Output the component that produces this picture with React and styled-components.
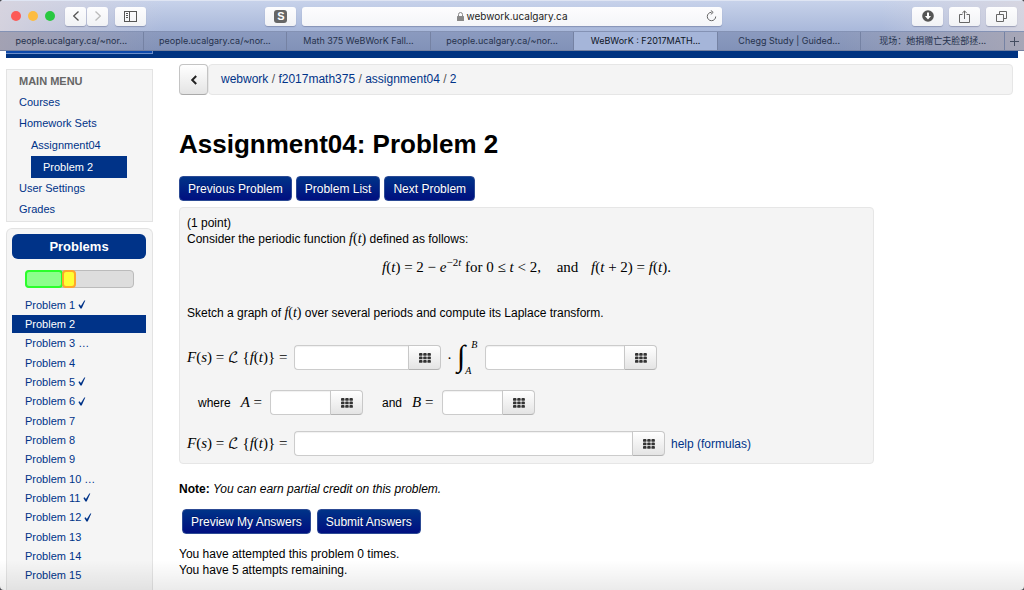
import React, { useState } from 'react';
import styled, { createGlobalStyle, css } from 'styled-components';

const GlobalStyle = createGlobalStyle`
  * {
    box-sizing: border-box;
  }

  body {
    margin: 0;
    background: #4a4a50;
    color: #000;
    font-family: "Liberation Sans", Arial, sans-serif;
    font-size: 12px;
    line-height: 16px;
  }

  button, input {
    font-family: inherit;
    font-size: inherit;
  }

  a {
    color: #003388;
    text-decoration: none;
  }
`;

const Window = styled.div`
  position: relative;
  display: flex;
  flex-direction: column;
  min-height: 100vh;
  overflow: hidden;
  background: #fff;
  border-radius: 4px;

  &::after {
    content: '';
    position: absolute;
    left: 0;
    right: 0;
    bottom: 0;
    height: 30px;
    background: linear-gradient(rgba(0, 0, 0, 0), rgba(0, 0, 0, 0.08));
    pointer-events: none;
  }
`;

/* ---------- browser ---------- */

const Toolbar = styled.header`
  display: flex;
  align-items: center;
  height: 31px;
  padding: 0 7px;
  border-top: 1px solid #dfe5f3;
  background:
    linear-gradient(90deg, rgba(216, 212, 222, 0.9), rgba(216, 212, 222, 0) 16%, rgba(216, 212, 222, 0) 86%, rgba(216, 214, 224, 0.9)),
    linear-gradient(#c7d2ea, #a9b8da);
`;

const ToolbarSide = styled.div`
  display: flex;
  flex: 1;
  align-items: center;
  gap: ${({ gap }) => gap || 0}px;
  justify-content: ${({ end }) => (end ? 'flex-end' : 'flex-start')};
`;

const Lights = styled.div`
  display: flex;
  gap: 7px;
  margin: 0 10px 0 4px;
`;

const Light = styled.span`
  width: 10px;
  height: 10px;
  border-radius: 50%;
  background: ${({ color }) => color};
`;

const ToolButton = styled.button`
  display: flex;
  align-items: center;
  justify-content: center;
  width: ${({ narrow }) => (narrow ? 21 : 31)}px;
  height: 19px;
  margin-right: ${({ after }) => after || 0}px;
  margin-left: ${({ push }) => (push ? 'auto' : 0)};
  padding: 0;
  border: 0;
  border-radius: 3px;
  background: linear-gradient(#fdfdfe, #f1f2f5);
  box-shadow: 0 1px 1px rgba(60, 70, 110, 0.35);
  color: #555;
`;

const AddressBar = styled.div`
  display: flex;
  align-items: center;
  justify-content: center;
  width: 41.5%;
  height: 19px;
  padding: 0 5px 0 16px;
  border-radius: 3px;
  background: linear-gradient(#fdfdfe, #f4f5f8);
  box-shadow: 0 1px 1px rgba(60, 70, 110, 0.35);
  color: #222;
  font-family: Inter, sans-serif;
  font-size: 10px;
`;

const Address = styled.div`
  display: flex;
  flex: 1;
  align-items: center;
  justify-content: center;
  gap: 3px;
`;

const Reload = styled.button`
  display: flex;
  padding: 0;
  border: 0;
  background: none;
`;

const Badge = styled.span`
  width: 13px;
  height: 13px;
  border-radius: 3px;
  background: #666;
  color: #fff;
  font-size: 11px;
  font-weight: bold;
  line-height: 13px;
`;

const TabStrip = styled.nav`
  display: flex;
  height: 20px;
  border-top: 1px solid #8492b4;
  border-bottom: 1px solid #74809f;
  background:
    linear-gradient(90deg, rgba(166, 163, 178, 0.9), rgba(166, 163, 178, 0) 16%, rgba(166, 163, 178, 0) 80%, rgba(170, 168, 182, 0.9)),
    linear-gradient(#8b9abf, #8292b8);
`;

const Tab = styled.a`
  flex: 1;
  min-width: 0;
  border-right: 1px solid #7582a3;
  color: #26324c;
  font-family: Inter, "Noto Sans CJK SC", sans-serif;
  font-size: 9px;
  line-height: 18px;
  text-align: center;
  white-space: nowrap;

  ${({ active }) => active && css`
    background: #a5b5d9;
    color: #0d1424;
  `}
`;

const NewTab = styled.button`
  display: flex;
  align-items: center;
  justify-content: center;
  width: 19px;
  padding: 0;
  border: 0;
  background: none;
`;

/* ---------- page ---------- */

const Masthead = styled.div`
  height: 7px;
  margin: 0 6px;
  background: #003380;
`;

const Logo = styled.div`
  width: 147px;
  height: 3px;
  border: solid #6c8fca;
  border-width: 0 1px 1px 0;
  background: #0d49ab;
`;

const Body = styled.div`
  display: flex;
  flex: 1;
  gap: 26px;
  padding: 6px 11px 0 6px;
`;

const Sidebar = styled.aside`
  display: flex;
  flex: 0 0 147px;
  flex-direction: column;
  gap: 6px;
  padding-top: 5px;
  font-size: 11px;
`;

const Menu = styled.nav`
  padding: 0 12px 1px;
  border: 1px solid #e3e3e3;
  background: #f5f5f5;
`;

const MenuTitle = styled.h2`
  margin: 0;
  color: #666;
  font-size: 11px;
  line-height: 22px;
`;

const MenuList = styled.ul`
  margin: 0;
  padding: 0 0 0 ${({ nested }) => (nested ? 12 : 0)}px;
  line-height: ${({ nested }) => (nested ? 22 : 21)}px;
  list-style: none;
`;

const MenuLink = styled.a`
  display: block;

  ${({ active }) => active && css`
    margin-right: 13px;
    padding-left: 12px;
    background: #003388;
    color: #fff;
  `}
`;

const ProblemsBox = styled.nav`
  display: flex;
  flex: 1;
  flex-direction: column;
  padding: 5px 6px 5px 5px;
  border: 1px solid #e3e3e3;
  border-bottom: 0;
  border-radius: 6px 6px 0 0;
  background: #f5f5f5;
`;

const ProblemsTitle = styled.h2`
  margin: 0;
  border-radius: 6px;
  background: #003388;
  color: #fff;
  font-size: 13px;
  line-height: 25px;
  text-align: center;
`;

const Progress = styled.div`
  display: flex;
  height: 18px;
  margin: 11px 12px 7px 13px;
  border: 1px solid #bbb;
  border-radius: 4px;
  background: #ddd;
`;

const Bar = styled.div`
  margin: -1px 0 -1px -1px;
  border: 2px solid ${({ edge }) => edge};
  border-radius: 4px;
  background: ${({ fill }) => fill};
`;

const ProblemList = styled.ul`
  display: flex;
  flex: 1;
  flex-direction: column;
  margin: 0;
  padding: 0;
  list-style: none;
`;

const ProblemItem = styled.li`
  display: flex;
  flex: 1;
  min-height: 17px;
`;

const ProblemLink = styled.a`
  display: flex;
  flex: 1;
  align-items: center;
  gap: 3px;
  margin: 1px 0;
  padding-left: 13px;

  ${({ active }) => active && css`
    background: #003388;
    color: #fff;
  `}
`;

const Main = styled.main`
  flex: 1;
  min-width: 0;
`;

const CrumbRow = styled.div`
  display: flex;
`;

const UpButton = styled.button`
  display: flex;
  align-items: center;
  justify-content: center;
  width: 29px;
  height: 31px;
  padding: 0;
  border: 1px solid #c4c4c4;
  border-bottom-color: #aaa;
  border-radius: 4px;
  background: linear-gradient(#fff, #e4e4e4);
`;

const Crumbs = styled.nav`
  flex: 1;
  padding: 0 12px;
  border: 1px solid #e6e6e6;
  border-radius: 4px;
  background: #f4f4f4;
  color: #555;
  line-height: 29px;
`;

const Title = styled.h1`
  margin: 32px 0 15px;
  font-size: 26px;
  line-height: 34px;
`;

const Actions = styled.div`
  display: flex;
  gap: ${({ wide }) => (wide ? 6 : 4)}px;
  padding-left: ${({ wide }) => (wide ? 3 : 0)}px;
`;

const PrimaryButton = styled.button`
  height: 25px;
  padding: 0 8px;
  border: 1px solid #2c4a94;
  border-radius: 4px;
  background: linear-gradient(#003388, #000f80);
  color: #fff;
  text-shadow: 0 -1px 0 rgba(0, 0, 0, 0.25);
  white-space: nowrap;
`;

const Panel = styled.section`
  width: 83.333%;
  margin-top: 6px;
  padding: 7px;
  border: 1px solid #e6e6e6;
  border-radius: 4px;
  background: #f4f4f4;
`;

const Text = styled.p`
  margin: 0;
`;

const Sketch = styled.p`
  margin: 28px 0 24px;
`;

const MathText = styled.span`
  font-family: "Liberation Serif", "Times New Roman", serif;
  font-size: ${({ small }) => (small ? 14 : 15)}px;
  line-height: 16px;
  white-space: nowrap;

  sup {
    font-size: 11px;
    line-height: 0;
  }
`;

const Formula = styled.div`
  margin-top: 12px;
  text-align: center;
  line-height: 18px;
`;

const FormulaWord = styled.span`
  padding: 0 9px 0 12px;
`;

const Script = styled.span`
  font-family: "DejaVu Math TeX Gyre", "DejaVu Serif", "DejaVu Sans", serif;
  font-size: 14px;
  line-height: 0;
`;

const Row = styled.div`
  display: flex;
  align-items: center;
  margin-top: ${({ space }) => space || 0}px;
  padding-left: ${({ indent }) => indent || 0}px;
`;

const Label = styled.label`
  flex: none;
  width: ${({ width }) => (width ? `${width}px` : 'auto')};
  white-space: nowrap;
`;

const Word = styled.span`
  margin-right: 10px;
`;

const AnswerBox = styled.span`
  display: flex;
  margin-right: ${({ after }) => after || 0}px;
`;

const AnswerInput = styled.input`
  width: ${({ size }) => size}px;
  height: 25px;
  padding: 0 5px;
  border: 1px solid #ccc;
  border-right: 0;
  border-radius: 4px 0 0 4px;
  background: #fff;
  box-shadow: inset 0 1px 1px rgba(0, 0, 0, 0.06);
`;

const KeypadButton = styled.button`
  display: flex;
  align-items: center;
  justify-content: center;
  width: 33px;
  height: 25px;
  padding: 0;
  border: 1px solid #c8c8c8;
  border-bottom-color: #b3b3b3;
  border-radius: 0 4px 4px 0;
  background: linear-gradient(#fff, #e4e4e4);
`;

const Integral = styled.span`
  display: flex;
  flex: none;
  align-items: flex-start;
  width: 28px;
  height: 36px;
  margin: -6px 0 -6px 5px;
  font-family: "Liberation Serif", serif;
`;

const IntegralSign = styled.span`
  font-size: 30px;
  font-style: italic;
  line-height: 32px;
`;

const Limits = styled.span`
  display: flex;
  flex-direction: column;
  justify-content: space-between;
  height: 36px;
  font-size: 10px;
  font-style: italic;
  line-height: 10px;
`;

const Upper = styled.span`
  padding-left: 6px;
`;

const Note = styled.p`
  margin: 17px 0 12px;
`;

const Attempts = styled.p`
  margin: 12px 0 0;
`;

const Chevron = ({ flip, color = '#555' }) => (
  <svg width="8" height="12" viewBox="0 0 8 12" fill="none" stroke={color} strokeWidth="1.3">
    <path d={flip ? 'M1.5 1.5 6.3 6l-4.8 4.5' : 'M6.5 1.5 1.7 6l4.8 4.5'} />
  </svg>
);

const Check = () => (
  <svg width="8" height="9" viewBox="0 0 8 9" fill="#003388">
    <path d="M.4 5.1 1.6 4.3 2.9 6 6.3.4 7.3.4 3.7 8.4 2.4 8.4z" />
  </svg>
);

const Keypad = () => (
  <svg width="12" height="10" viewBox="0 0 12 10" fill="#333">
    {[0, 1, 2].map((r) => [0, 1, 2].map((c) => (
      <rect key={`${r}${c}`} x={c * 4.2} y={r * 3.5} width="3.5" height="2.8" rx="0.9" />
    )))}
  </svg>
);

const Answer = ({ id, size, after }) => {
  const [value, setValue] = useState('');

  return (
    <AnswerBox after={after}>
      <AnswerInput id={id} aria-label={id} size={size} value={value} onChange={(event) => setValue(event.target.value)} />
      <KeypadButton type="button" aria-label="Equation editor"><Keypad /></KeypadButton>
    </AnswerBox>
  );
};

const Laplace = () => (
  <MathText><i>F</i>(<i>s</i>) = <Script>ℒ</Script> {'{'}<i>f</i>(<i>t</i>){'}'} =</MathText>
);

const tabs = [
  'people.ucalgary.ca/~nor...',
  'people.ucalgary.ca/~nor...',
  'Math 375 WeBWorK Fall...',
  'people.ucalgary.ca/~nor...',
  'WeBWorK : F2017MATH...',
  'Chegg Study | Guided...',
  '现场：她捐赠亡夫脸部拯...',
];

const solved = [1, 5, 6, 11, 12];
const started = [3, 10];
const problems = Array.from({ length: 15 }, (_, i) => i + 1);

const Browser = () => (
  <>
    <Toolbar>
      <ToolbarSide>
        <Lights>
          <Light color="#fc5b57" />
          <Light color="#fdbc40" />
          <Light color="#28c840" />
        </Lights>
        <ToolButton narrow after={1} aria-label="Back"><Chevron /></ToolButton>
        <ToolButton narrow after={7} aria-label="Forward"><Chevron flip color="#bbb" /></ToolButton>
        <ToolButton aria-label="Show sidebar">
          <svg width="13" height="11" viewBox="0 0 13 11" fill="none" stroke="#555">
            <rect x="0.5" y="0.5" width="12" height="10" />
            <path d="M5.5 1v9M2 2.5h2M2 4.5h2M2 6.5h2" />
          </svg>
        </ToolButton>
        <ToolButton push after={6} aria-label="Extension"><Badge>S</Badge></ToolButton>
      </ToolbarSide>
      <AddressBar>
        <Address>
          <svg width="7" height="9" viewBox="0 0 7 9" fill="#888">
            <rect y="4" width="7" height="5" rx="0.6" />
            <path d="M1.5 4V2.5a2 2 0 0 1 4 0V4" fill="none" stroke="#888" />
          </svg>
          webwork.ucalgary.ca
        </Address>
        <Reload aria-label="Reload">
          <svg width="11" height="12" viewBox="0 0 11 12" fill="none" stroke="#666">
            <path d="M5.5 2.3A4.2 4.2 0 1 0 9.7 6.5" />
            <path d="M4.8.4 7.2 2.4 4.8 4.4" />
          </svg>
        </Reload>
      </AddressBar>
      <ToolbarSide end gap={6}>
        <ToolButton aria-label="Downloads">
          <svg width="12" height="12" viewBox="0 0 12 12">
            <circle cx="6" cy="6" r="5.8" fill="#555" />
            <path d="M6 2.5v5" stroke="#fff" strokeWidth="2" />
            <path d="M2.9 5.9h6.2L6 9.4z" fill="#fff" />
          </svg>
        </ToolButton>
        <ToolButton aria-label="Share">
          <svg width="11" height="13" viewBox="0 0 11 13" fill="none" stroke="#666">
            <path d="M3.5 4.5h-3v8h10v-8h-3M5.5 9V1M3.2 3.2 5.5.9l2.3 2.3" />
          </svg>
        </ToolButton>
        <ToolButton aria-label="Show all tabs">
          <svg width="11" height="11" viewBox="0 0 11 11" fill="none" stroke="#666">
            <path d="M.5 3.5h7v7h-7zM3.5 3V.5h7v7H8" />
          </svg>
        </ToolButton>
      </ToolbarSide>
    </Toolbar>
    <TabStrip>
      {tabs.map((tab, index) => (
        <Tab key={index} href="#" active={index === 4}>{tab}</Tab>
      ))}
      <NewTab aria-label="New tab">
        <svg width="9" height="9" viewBox="0 0 9 9" stroke="#444c60"><path d="M4.5 0v9M0 4.5h9" /></svg>
      </NewTab>
    </TabStrip>
  </>
);

const SideMenus = () => (
  <Sidebar>
    <Menu>
      <MenuTitle>MAIN MENU</MenuTitle>
      <MenuList>
        <li><MenuLink href="#">Courses</MenuLink></li>
        <li>
          <MenuLink href="#">Homework Sets</MenuLink>
          <MenuList nested>
            <li><MenuLink href="#">Assignment04</MenuLink></li>
            <li><MenuLink href="#" active>Problem 2</MenuLink></li>
          </MenuList>
        </li>
        <li><MenuLink href="#">User Settings</MenuLink></li>
        <li><MenuLink href="#">Grades</MenuLink></li>
      </MenuList>
    </Menu>
    <ProblemsBox>
      <ProblemsTitle>Problems</ProblemsTitle>
      <Progress>
        <Bar edge="#2bff2b" fill="#8cff8c" style={{ width: `${(solved.length / problems.length) * 100 + 2}%` }} />
        <Bar edge="#ffa62b" fill="#ffff33" style={{ width: `${(started.length / problems.length) * 100}%` }} />
      </Progress>
      <ProblemList>
        {problems.map((n) => (
          <ProblemItem key={n}>
            <ProblemLink href="#" active={n === 2}>
              Problem {n}
              {solved.includes(n) && <Check />}
              {started.includes(n) && <span>…</span>}
            </ProblemLink>
          </ProblemItem>
        ))}
      </ProblemList>
    </ProblemsBox>
  </Sidebar>
);

const App = () => (
  <>
    <GlobalStyle />
    <Window>
      <Browser />
      <Masthead><Logo /></Masthead>
      <Body>
        <SideMenus />
        <Main>
          <CrumbRow>
            <UpButton aria-label="Up">
              <svg width="8" height="10" viewBox="0 0 8 10" fill="none" stroke="#222" strokeWidth="2">
                <path d="M6.2 1 2.2 5l4 4" />
              </svg>
            </UpButton>
            <Crumbs>
              <a href="#">webwork</a> / <a href="#">f2017math375</a> / <a href="#">assignment04</a> / <a href="#">2</a>
            </Crumbs>
          </CrumbRow>
          <Title>Assignment04: Problem 2</Title>
          <Actions>
            <PrimaryButton>Previous Problem</PrimaryButton>
            <PrimaryButton>Problem List</PrimaryButton>
            <PrimaryButton>Next Problem</PrimaryButton>
          </Actions>
          <Panel>
            <Text>(1 point)</Text>
            <Text>Consider the periodic function <MathText small><i>f</i>(<i>t</i>)</MathText> defined as follows:</Text>
            <Formula>
              <MathText>
                <i>f</i>(<i>t</i>) = 2 − <i>e</i><sup>−2<i>t</i></sup> for 0 ≤ <i>t</i> &lt; 2,
                <FormulaWord> and </FormulaWord>
                <i>f</i>(<i>t</i> + 2) = <i>f</i>(<i>t</i>).
              </MathText>
            </Formula>
            <Sketch>Sketch a graph of <MathText small><i>f</i>(<i>t</i>)</MathText> over several periods and compute its Laplace transform.</Sketch>
            <Row>
              <Label htmlFor="coefficient" width={107}><Laplace /></Label>
              <Answer id="coefficient" size={114} after={6} />
              <MathText>·</MathText>
              <Integral>
                <IntegralSign>∫</IntegralSign>
                <Limits><Upper>B</Upper><span>A</span></Limits>
              </Integral>
              <Answer id="integrand" size={139} />
            </Row>
            <Row space={20} indent={11}>
              <Label htmlFor="lower" width={72}><Word>where</Word><MathText><i>A</i> =</MathText></Label>
              <Answer id="lower" size={60} after={19} />
              <Label htmlFor="upper" width={60}><Word>and</Word><MathText><i>B</i> =</MathText></Label>
              <Answer id="upper" size={60} />
            </Row>
            <Row space={16}>
              <Label htmlFor="transform" width={107}><Laplace /></Label>
              <Answer id="transform" size={338} after={6} />
              <a href="#">help (formulas)</a>
            </Row>
          </Panel>
          <Note><b>Note:</b> <i>You can earn partial credit on this problem.</i></Note>
          <Actions wide>
            <PrimaryButton>Preview My Answers</PrimaryButton>
            <PrimaryButton>Submit Answers</PrimaryButton>
          </Actions>
          <Attempts>
            You have attempted this problem 0 times.<br />
            You have 5 attempts remaining.
          </Attempts>
        </Main>
      </Body>
    </Window>
  </>
);

export default App;
